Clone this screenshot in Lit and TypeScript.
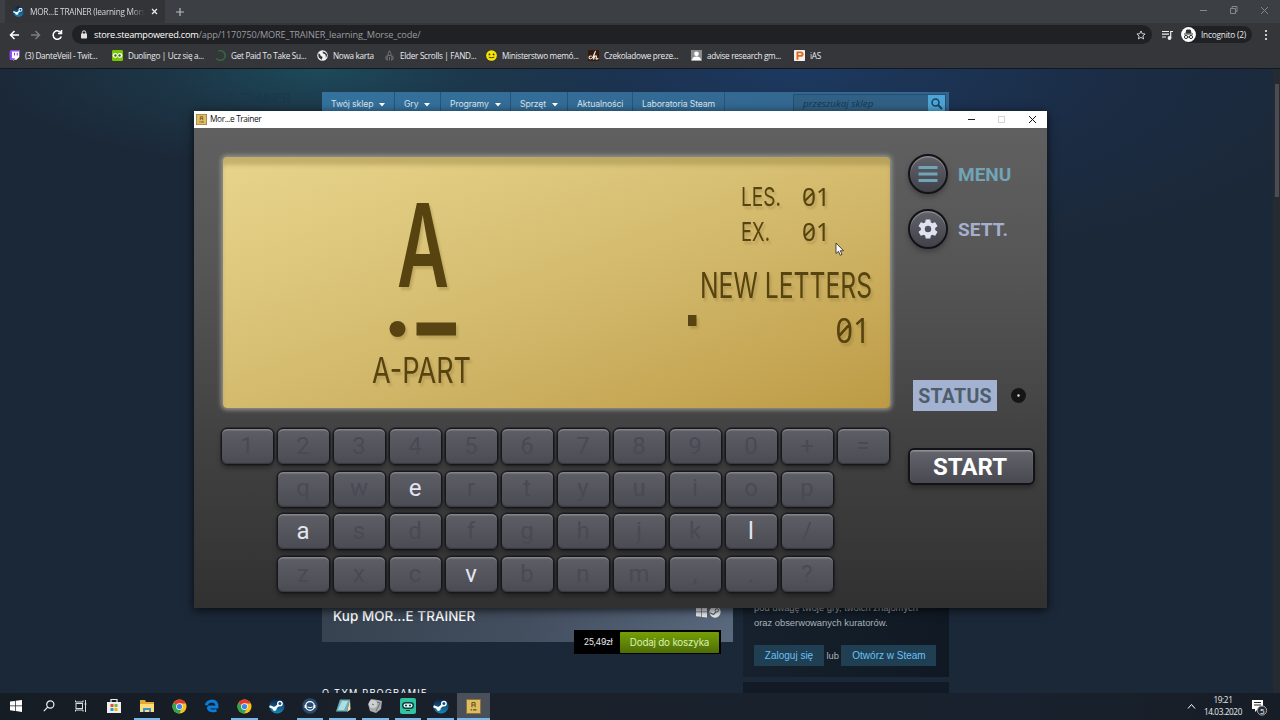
import { LitElement, html, svg, css } from "lit";
import { customElement } from "lit/decorators.js";
import { classMap } from "lit/directives/class-map.js";

const steam = (s: number) => html`<svg width=${s} height=${s} viewBox="0 0 16 16">
  <defs><linearGradient id="sg" x1="0" y1="0" x2="0" y2="1"><stop offset="0" stop-color="#0b1d3c"/><stop offset="1" stop-color="#1787bd"/></linearGradient></defs>
  <circle cx="8" cy="8" r="7.6" fill="url(#sg)"/>
  <path d="M.5 8.2 5.6 10.4 8.6 8 10.6 5.8" fill="none" stroke="#fff" stroke-width="2.3"/>
  <circle cx="10.9" cy="5.6" r="2.9" fill="#fff"/><circle cx="10.9" cy="5.6" r="1.5" fill="#17508a"/>
  <circle cx="5.6" cy="10.8" r="2.1" fill="#fff"/></svg>`;

const chrome = html`<svg width="15" height="15" viewBox="0 0 16 16">
  <circle cx="8" cy="8" r="7.5" fill="#fbc116"/>
  <path d="M8 8 1.5 4.3A7.5 7.5 0 0 1 14.5 4.3L14.6 4.8H8z" fill="#e33b2e"/>
  <path d="M8 8 1.5 4.3A7.5 7.5 0 0 0 7.6 15.5L11 9.6z" fill="#30a350"/>
  <circle cx="8" cy="8" r="3.6" fill="#f4f4f4"/><circle cx="8" cy="8" r="2.8" fill="#4285f0"/></svg>`;

const lcdIcon = (s: number) => html`<svg width=${s} height=${s} viewBox="0 0 16 16">
  <rect x=".5" y=".5" width="15" height="15" fill="#dfbd62" stroke="#8d7333"/>
  <path d="M6.3 8.8V3.8h3.4v5M6.3 6.4h3.4" fill="none" stroke="#5e4a19" stroke-width="1"/>
  <path d="M5 11.5h1.6M7.6 11.5h3.6" stroke="#5e4a19" stroke-width="1.4"/></svg>`;

const bookmarks = [
  { w: 103, t: "(3) DanteVeiil - Twit...", i: svg`<path d="M2 1h13v9l-4 4H8l-2 2v-2H2z" fill="#fff"/><path d="M1 2 3 0h13v2H4v9H1z" fill="#8d46e8"/><path d="M1 3h3v9h4v2l-2 2v-2H1z" fill="#8d46e8"/><path d="M8 4v4M12 4v4" stroke="#8d46e8" stroke-width="1.6"/>` },
  { w: 103, t: "Duolingo | Ucz się a...", i: svg`<rect width="16" height="16" rx="2" fill="#78c800"/><circle cx="4.6" cy="8" r="3.6" fill="#fff"/><circle cx="11.4" cy="8" r="3.6" fill="#fff"/><circle cx="5" cy="8" r="1.8" fill="#43621b"/><circle cx="11" cy="8" r="1.8" fill="#43621b"/><path d="m6.6 10 1.4 2 1.4-2z" fill="#f5a700"/>` },
  { w: 102, t: "Get Paid To Take Su...", i: svg`<path d="M5 1.5A7 7 0 1 1 2 12" fill="none" stroke="#2f6a3f" stroke-width="2.4"/>` },
  { w: 67, t: "Nowa karta", i: svg`<circle cx="8" cy="8" r="7.6" fill="#f2f2f2"/><path d="M2 5q3 0 3 3l3 2-1 4Q2 12 2 8zM8 2l1 3 3 1 1 4-2 2q4-2 3.500-6Q12 2 8 2z" fill="#35363a"/>` },
  { w: 102, t: "Elder Scrolls | FAND...", i: svg`<path d="M5 15Q2 14 2.500 10L5 8l-.5 4zm6 0q3-1 2.500-5L11 8l.5 4zM8 1 6 5v3h4V5zm0 9v5" fill="none" stroke="#77787b" stroke-width="1.300"/>` },
  { w: 102, t: "Ministerstwo memó...", i: svg`<circle cx="8" cy="8" r="7.8" fill="#f7e600"/><circle cx="5" cy="6.400" r="1.300" fill="#2c2a07"/><circle cx="11" cy="6.400" r="1.300" fill="#2c2a07"/><path d="M4 10.500q4 1.500 8 0" fill="none" stroke="#2c2a07" stroke-width="1.300"/>` },
  { w: 103, t: "Czekoladowe preze...", i: svg`<rect width="16" height="16" fill="#35190b"/><path d="M5.500 9q-4-1-4 2.500 1 3 5 0L11 1.500Q9 5 8 14q2-6 4-5.500 1 1-.5 4.500 1 1 3.500-1" fill="none" stroke="#f1e8df" stroke-width="1.600"/>` },
  { w: 103, t: "advise research gm...", i: svg`<rect width="16" height="16" fill="#8c8c8c"/><circle cx="8" cy="5.600" r="3.400" fill="#fff"/><path d="M1.500 15q0-5.500 6.500-5.500T14.500 15z" fill="#fff"/>` },
  { w: 40, t: "iAS", i: svg`<rect width="16" height="16" rx="1" fill="#f4f0ec"/><path d="M5 14V3.500h4.500q3 0 3 2.500t-3 2.500H5" fill="none" stroke="#e06a1c" stroke-width="2.800"/>` },
];

const nav: [string, number, boolean][] = [
  ["Twój sklep", 73, true], ["Gry", 46, true], ["Programy", 70, true],
  ["Sprzęt", 57, true], ["Aktualności", 65, false], ["Laboratoria Steam", 92, false],
];

const keyRows = ["1234567890+=", " qwertyuiop", " asdfghjkl/", " zxcvbnm,.?"];
const active = new Set(["e", "a", "l", "v"]);

@customElement("lcd-panel")
export class LcdPanel extends LitElement {
  static styles = css`
    :host { display: block; width: 667px; height: 251px; border-radius: 4px; overflow: visible;
      background: linear-gradient(160deg, #e8d48c 0%, #dcc67b 30%, #cfb466 62%, #bd9b45 100%);
      box-shadow: 0 0 4px 2px #93938f, inset 0 9px 4px -1px #8f7c3d66; }
    svg { display: block; overflow: visible; }
    text { font-family: Inter, sans-serif; fill: #57430f; }
    .num { font-family: "Noto Sans", sans-serif; font-feature-settings: "zero" 1; }
    .shade { filter: drop-shadow(2px 3px 1px #6e561d3d); }
  `;
  private word(s: string, x: number, y: number, w: number, size: number, weight = 400, cls = "") {
    return svg`<text class=${cls} x=${x} y=${y} font-size=${size} font-weight=${weight} textLength=${w} lengthAdjust="spacingAndGlyphs">${s}</text>`;
  }
  render() {
    return html`<svg class="shade" width="667" height="251" viewBox="223 157 667 251">
      ${this.word("A", 397, 287, 52, 115, 600)}
      <circle cx="397.500" cy="329" r="8" fill="#574412"/>
      <rect x="416.500" y="322.500" width="39.500" height="13" fill="#574412"/>
      ${this.word("A-PART", 372, 383, 99, 35)}
      ${this.word("LES.", 741, 206, 40, 26)}
      ${this.word("01", 802, 206, 28, 26, 400, "num")}
      ${this.word("EX.", 741, 241, 29, 26)}
      ${this.word("01", 802, 241, 28, 26, 400, "num")}
      ${this.word("NEW LETTERS", 700, 297.500, 172, 35)}
      ${this.word("01", 835.500, 342.500, 35, 35, 400, "num")}
      <rect x="688" y="315" width="8.500" height="11" fill="#574412"/>
    </svg>`;
  }
}

@customElement("trainer-window")
export class TrainerWindow extends LitElement {
  static styles = css`
    :host { display: flex; flex-direction: column; width: 853px; height: 497px; font-family: Roboto, sans-serif; box-shadow: 0 2px 9px #000b; }
    .title { height: 17px; background: #fff; display: flex; align-items: center; color: #111; font: 8.300px/14px "Open Sans", sans-serif; letter-spacing: -.38px; }
    .title .name { padding-bottom: 1px; }
    .title .ic { display: flex; padding: 0 3px 0 2px; }
    .title .sp { flex: 1; }
    .title svg { display: block; }
    .title .controls { margin-right: 9px; }
    .body { flex: 1; display: grid; grid-template-columns: 669px 127px; column-gap: 18px; padding: 29px 0 0 27px;
      background: linear-gradient(180deg, #606060 0%, #555 30%, #434343 62%, #313131 100%); }
    .left { display: flex; flex-direction: column; gap: 19px; }
    .lcdwrap { padding-left: 2px; height: 252px; }
    .keys { display: grid; grid-template-columns: repeat(12, 53px); column-gap: 3px; row-gap: 5.700px; }
    .key { box-sizing: border-box; height: 37px; border: 1.500px solid #17171b; border-radius: 6px; display: flex; align-items: center; justify-content: center;
      font-size: 24px; line-height: 30px; padding-bottom: 2px; padding-right: 1px; color: #4a4a53; background: linear-gradient(#5e5e67, #4b4b53);
      box-shadow: inset 0 1.500px 1px #85858c, inset 0 -1px 1px #37373f, 0 0 0 .5px #1b1b1f, 0 3px 5px #0005; }
    .key.on { color: #e4e4f1; }
    .side { display: flex; flex-direction: column; align-items: flex-start; }
    .line { display: flex; align-items: center; gap: 10px; height: 40px; font-size: 19px; font-weight: 700; margin: -3px 0 18px; }
    .menu { color: #71a4b7; }
    .sett { color: #a5afce; letter-spacing: .1px; }
    .round { box-sizing: border-box; width: 40px; height: 40px; border-radius: 50%; border: 2px solid #121217; background: linear-gradient(#62626a, #41414a);
      display: grid; place-items: center; box-shadow: inset 0 1.500px 1px #8b8b92, 0 3px 5px #0004; }
    .round svg { display: block; }
    .status { display: flex; align-items: center; gap: 14px; margin: 113px 0 37px 5px; }
    .tag { width: 84px; height: 31px; background: #a3b2d1; display: grid; place-items: center; color: #4f5d6b; font-size: 19.500px; font-weight: 700; letter-spacing: .3px; line-height: 33px; }
    .led { width: 15px; height: 15px; border-radius: 50%; background: radial-gradient(circle, #ddd 0 .7px, #151515 1.700px); }
    .start { box-sizing: border-box; width: 127px; height: 37px; border: 2px solid #131317; border-radius: 6px; display: grid; place-items: center; color: #fff; font-size: 24px; line-height: 35px; font-weight: 700; padding-right: 3px;
      background: linear-gradient(#64646c, #484850); box-shadow: inset 0 1.500px 1px #92929a, 0 3px 5px #0005; }
  `;
  render() {
    return html`
      <div class="title"><span class="ic">${lcdIcon(11)}</span><span class="name">Mor...e Trainer</span><span class="sp"></span>
        <svg class="controls" width="72" height="11" viewBox="0 0 72 11" fill="none"><path d="M2 5.500h7" stroke="#222"/><rect x="32.500" y="2.500" width="6" height="6" stroke="#d5d5d5"/><path d="m63 2 7 7m0-7-7 7" stroke="#111"/></svg>
      </div>
      <div class="body">
        <div class="left">
          <div class="lcdwrap"><lcd-panel></lcd-panel></div>
          <div class="keys">${keyRows.map((r, ri) => [...r.padEnd(ri < 3 ? 12 : r.length)].map((k) =>
            k === " " ? html`<span></span>` : html`<div class=${classMap({ key: true, on: active.has(k) })}>${k}</div>`))}</div>
        </div>
        <div class="side">
          <div class="line menu"><div class="round"><svg width="20" height="18"><path d="M.5 2.500h19M.5 9h19M.5 15.500h19" stroke="#71a4b7" stroke-width="2.800"/></svg></div>MENU</div>
          <div class="line sett"><div class="round"><svg width="24" height="24" viewBox="0 0 24 24"><path fill="#dfe3f1" d="M19.140 12.940c.04-.3.060-.61.060-.94s-.02-.64-.07-.94l2.030-1.580a.49.49 0 0 0 .12-.61l-1.920-3.320a.49.49 0 0 0-.59-.22l-2.390.96a7 7 0 0 0-1.620-.94l-.36-2.540A.48.48 0 0 0 13.920 2.400h-3.840a.48.48 0 0 0-.47.410l-.36 2.540a7 7 0 0 0-1.620.94l-2.390-.96a.48.48 0 0 0-.59.22L2.740 8.870a.48.48 0 0 0 .12.610l2.030 1.580a7 7 0 0 0 0 1.880l-2.030 1.580a.49.49 0 0 0-.12.610l1.920 3.320c.12.220.37.290.59.220l2.390-.96c.5.380 1.030.7 1.620.94l.36 2.540c.05.240.24.410.48.410h3.840c.24 0 .44-.17.470-.41l.36-2.540a7 7 0 0 0 1.620-.94l2.390.96c.22.080.47 0 .59-.22l1.920-3.320a.48.48 0 0 0-.12-.61zM12 15.200a3.200 3.200 0 1 1 0-6.400 3.200 3.200 0 0 1 0 6.400z"/></svg></div>SETT.</div>
          <div class="status"><div class="tag">STATUS</div><div class="led"></div></div>
          <div class="start">START</div>
        </div>
      </div>`;
  }
}

@customElement("app-root")
export class AppRoot extends LitElement {
  static styles = css`
    :host { display: flex; flex-direction: column; position: relative; width: 1280px; height: 720px; overflow: hidden; background: #1b2838; font-family: "Open Sans", sans-serif; color: #e8eaed; }
    svg { display: block; flex: none; }
    .tabs { height: 23px; flex: none; background: #3c3f43; display: flex; align-items: center; padding: 0 5px; }
    .tab { align-self: stretch; width: 160px; background: #323438; border-radius: 0 0 2px 0; display: flex; align-items: center; gap: 6px; box-sizing: border-box; padding-left: 8px; font-size: 8.300px; letter-spacing: -.28px; }
    .tab .name { width: 115px; overflow: hidden; white-space: nowrap; color: #d5d6d8; mask-image: linear-gradient(90deg, #000 88%, transparent); }
    .plus { margin-left: 10px; }
    .sp { flex: 1; }
    .bar { height: 23px; flex: none; background: #35363a; display: flex; align-items: center; padding-left: 8px; }
    .pill { box-sizing: border-box; width: 1080px; height: 19px; border-radius: 10px; background: #202124; display: flex; align-items: center; padding: 0 6px 0 8px; font-size: 9.200px; color: #9a9ca0; margin-left: 8px; flex: none; }
    .pill .url { margin-left: 6px; white-space: nowrap; letter-spacing: -.14px; }
    .pill b { color: #fff; font-weight: 500; letter-spacing: -.24px; }
    .note { margin-left: 9px; }
    .inc { display: flex; align-items: center; height: 17px; width: 71px; border-radius: 9px; background: #202124; gap: 5px; font-size: 8.300px; letter-spacing: -.22px; white-space: nowrap; margin-left: 7px; }
    .more { margin-left: 10px; }
    .marks { box-sizing: border-box; height: 23px; flex: none; background: #35363a; border-bottom: 1px solid #111820; display: flex; align-items: center; padding: 0 0 3px 9px; font-size: 8.200px; letter-spacing: -.3px; }
    .mark { display: flex; align-items: center; gap: 5px; white-space: nowrap; flex: none; }
    .page { height: 624px; flex: none; overflow: hidden; display: flex;
      background: radial-gradient(ellipse 330px 100px at 320px 0, #1d4a5a 0, #1d445580 45%, transparent 100%), radial-gradient(ellipse 560px 200px at 800px 0, #1c3960 0, #1b2f4d80 60%, transparent 100%), #1b2838; }
    .gutter { box-sizing: border-box; width: 322px; flex: none; padding: 21px 32px 0 0; text-align: right; font: 13px/16px Inter, sans-serif; letter-spacing: -.6px; color: #19384b; }
    .site { width: 627px; margin: 23px 0 0; flex: none; font-family: Inter, sans-serif; display: flex; flex-direction: column; }
    .nav { height: 26px; background: linear-gradient(90deg, #34719d, #33658d); display: flex; color: #d9e5ee; font-size: 8.700px; flex: none; }
    .item { box-sizing: border-box; border-right: 1px solid #275479; height: 26px; padding: 6px 0 0 9px; line-height: 12px; display: flex; gap: 6px; white-space: nowrap; letter-spacing: -.13px; }
    .item svg { margin-top: 5px; }
    .search { margin: 2px 3px 0 auto; width: 153px; height: 22px; box-sizing: border-box; border: 1px solid #254f72; background: #306185; display: flex; justify-content: space-between; padding-left: 9px; font: italic 9.800px/18px "Open Sans", sans-serif; color: #15364f; }
    .glass { width: 17px; height: 20px; background: #4da5d5; display: flex; justify-content: center; padding-top: 2px; box-sizing: border-box; }
    .lower { display: flex; gap: 10px; margin-top: 453px; flex: none; }
    .buy { width: 411px; }
    .box { height: 71px; background: linear-gradient(100deg, #36424f, #434e5f 50%, #59697e); display: flex; justify-content: space-between; box-sizing: border-box; padding: 35px 12px 0 11px; font-size: 13.400px; font-weight: 500; line-height: 20px; color: #fff; letter-spacing: .06px; }
    .os { display: flex; gap: 2px; }
    .price { margin: -12px 12px 0 auto; width: 147px; height: 24px; box-sizing: border-box; padding: 2px; background: #000; display: flex; font-size: 8.700px; align-items: center; }
    .price span { width: 44px; text-align: center; letter-spacing: -.3px; }
    .add { flex: 1; height: 21px; border-radius: 1px; display: grid; place-items: center; background: linear-gradient(#74a006, #4e6d07); color: #daf0b0; font-size: 9.800px; letter-spacing: -.18px; }
    .about { margin-top: 32px; font-size: 9.200px; letter-spacing: 1.250px; line-height: 14px; color: #fff; white-space: nowrap; }
    .rec { width: 206px; display: flex; flex-direction: column; gap: 5px; font-family: "Liberation Sans", sans-serif; }
    .card { height: 106px; box-sizing: border-box; padding: 30px 0 0 11px; background: linear-gradient(90deg, #16212d, #101923); color: #acb2b8; font-size: 9.350px; line-height: 14.500px; white-space: nowrap; }
    .btns { display: flex; align-items: center; gap: 2.500px; margin-top: 15px; line-height: 12px; }
    .btn { height: 21px; width: 70px; background: #213f53; color: #67c1f5; display: grid; place-items: center; font-size: 10px; }
    .btn.wide { width: 95px; }
    .next { height: 20px; background: #111a25; }
    .scroll { margin-left: auto; width: 7px; background: #262a31; padding-top: 15px; }
    .thumb { height: 113px; width: 4px; margin-left: 2px; background: #4b4d52; }
    .task { height: 27px; flex: none; background: linear-gradient(90deg, #161c24, #1a212b 40%, #18212d 80%, #171d26); display: flex; }
    .app { width: 32.650px; box-sizing: border-box; border-bottom: 1px solid transparent; display: grid; place-items: center; position: relative; }
    .app.open::after { content: ""; position: absolute; bottom: -1px; left: 3px; right: 3px; height: 2px; background: #76b9ed; }
    .app.cur { background: #4a505a; background-clip: border-box; }
    .app.cur::after { left: 0; right: 0; }
    .tray { margin-left: auto; display: flex; align-items: center; gap: 8px; padding-right: 12px; font-size: 8.200px; line-height: 12px; text-align: center; letter-spacing: -.37px; }
    .clock { position: relative; top: -1px; }
    trainer-window { position: absolute; left: 194px; top: 111px; }
    .cursor { position: absolute; left: 835px; top: 242px; }
  `;
  private taskIcons = [
    { c: "", i: html`<svg width="14" height="14" viewBox="0 0 14 14"><path d="m1 2.600 5-.7v4.700H1zM6.700 1.800 13 1v5.600H6.700zM1 7.300h5V12l-5-.7zM6.700 7.300H13V13l-6.300-.9z" fill="#fff"/></svg>` },
    { c: "", i: html`<svg width="14" height="14" fill="none" stroke="#eee" stroke-width="1.200"><circle cx="8.300" cy="5.500" r="3.600"/><path d="M5.700 8.200 1.800 12.200"/></svg>` },
    { c: "", i: html`<svg width="14" height="14" fill="none" stroke="#ddd"><rect x="1" y="4.500" width="6.500" height="5"/><path d="M.5 1.500v1.500H8V1.500M.5 12.500v-1.500H8v1.500M10.500 1v12M9.500 5h2"/></svg>` },
    { c: "", i: html`<svg width="16" height="16"><path d="M1 4h14v11H1z" fill="#eee"/><path d="M5 4V1.500h6V4" fill="none" stroke="#eee" stroke-width="1.200"/><path d="M4.500 6h3v3h-3z" fill="#e84d2a"/><path d="M8.500 6h3v3h-3z" fill="#73b92c"/><path d="M4.500 10h3v3h-3z" fill="#2897db"/><path d="M8.500 10h3v3h-3z" fill="#edb410"/></svg>` },
    { c: "open", i: html`<svg width="16" height="14"><path d="M1 1h5l1 2h8v10H1z" fill="#e2a934"/><path d="M1 5h14v8H1z" fill="#ffdc78"/><path d="M4 13V9h8v4h-2v-2H6v2z" fill="#3494d6"/></svg>` },
    { c: "", i: chrome },
    { c: "", i: html`<svg width="16" height="16" viewBox="0 0 16 16"><path d="M3.800 9h9.200Q13.200 3.200 8 3 3.500 3.200 2 7.200M4.200 9q.2 5.400 8.300 3.300" fill="none" stroke="#0b7cd8" stroke-width="2.800"/></svg>` },
    { c: "open", i: chrome },
    { c: "", i: steam(16) },
    { c: "open", i: html`<svg width="16" height="16"><circle cx="8" cy="8" r="7.700" fill="#284c70"/><circle cx="8" cy="8" r="4.300" fill="none" stroke="#fff" stroke-width="1.300"/><path d="M3.500 7v3M12.500 7v3" stroke="#fff" stroke-width="1.800"/><path d="M5.500 9Q8 10.500 10.500 9" fill="none" stroke="#fff"/></svg>` },
    { c: "open", i: html`<svg width="16" height="16"><path d="M5 1.500h10L12 13.500H1z" fill="#69b1bd"/><path d="M7 3h6l-4 9H3z" fill="#b1dde2"/><path d="m15 1.500.5 10L12 14z" fill="#eee2b0"/></svg>` },
    { c: "open", i: html`<svg width="16" height="16"><path d="M4 1 11 2l4 1-1 8-5 4-6-2-2-7z" fill="#a9abad"/><circle cx="6" cy="6" r="4" fill="#cfd0d1"/><path d="m10 4 3 1-4 8M5 6l2 1" fill="none" stroke="#6d7073"/></svg>` },
    { c: "open", i: html`<svg width="16" height="16"><rect width="16" height="16" rx="2" fill="#31c3a2"/><rect x="2" y="4" width="12" height="7" rx="3.500" fill="#153d3c"/><rect x="3.500" y="5.500" width="9" height="4" rx="2" fill="#d9f7ef"/><path d="M5 7.500h2M9 7.500h2" stroke="#153d3c" stroke-width="1.500"/><path d="M6 12.500h4" stroke="#153d3c"/></svg>` },
    { c: "open", i: steam(16) },
    { c: "open cur", i: lcdIcon(15) },
  ];
  render() {
    return html`
      <div class="tabs">
        <div class="tab">${steam(11)}<span class="name">MOR...E TRAINER (learning Mors</span><svg width="7" height="7"><path d="m1 1 5 5m0-5L1 6" stroke="#eee" stroke-width="1.200"/></svg></div>
        <svg class="plus" width="10" height="10"><path d="M5 1v8M1 5h8" stroke="#bbb" stroke-width="1.200"/></svg>
        <span class="sp"></span>
        <svg width="75" height="18" fill="none" stroke="#85878b"><path d="M0 7.500h7M61 4l7 7m0-7-7 7"/><path d="M30.500 5.500h5v5h-5zM32 5.500v-2h5v5h-1.500"/></svg>
      </div>
      <div class="bar">
        <svg width="56" height="14" fill="none" stroke-width="1.500"><path d="M11 7H2.500M6.500 3l-4 4 4 4" stroke="#fff"/><path d="M23 7h8.500M27.500 3l4 4-4 4" stroke="#7b7d81"/><path d="M53 5A4.200 4.200 0 1 0 53.300 8.500M53.500 2v3.500H50" stroke="#fff"/></svg>
        <div class="pill"><svg width="8" height="9"><rect x="1" y="3.500" width="6" height="5" rx=".7" fill="#e0e0e0"/><path d="M2.300 4V2.500a1.700 1.700 0 0 1 3.400 0V4" fill="none" stroke="#e0e0e0"/></svg>
          <span class="url"><b>store.steampowered.com</b>/app/1170750/MORE_TRAINER_learning_Morse_code/</span><span class="sp"></span>
          <svg width="10" height="10" viewBox="0 0 10 10"><path d="m5 1 1.200 2.700 2.900.3L6.900 6l.7 2.900L5 7.400 2.400 8.900 3.100 6 .9 4l2.900-.3z" fill="none" stroke="#ddd" stroke-width=".9"/></svg></div>
        <svg class="note" width="13" height="12" fill="none" stroke="#eee" stroke-width="1.200"><path d="M1 2.500h7M1 5.200h7M1 8h4M9.700 9V2.500H12"/><circle cx="8.500" cy="9" r="1.300" fill="#eee"/></svg>
        <div class="inc"><svg width="15" height="15" viewBox="0 0 15 15"><circle cx="7.500" cy="7.500" r="7.400" fill="#fff"/><path d="M3 7h9M5 6l.7-3h3.600l.7 3z" fill="#333" stroke="#333"/><circle cx="5" cy="10" r="1.600" fill="none" stroke="#333"/><circle cx="10" cy="10" r="1.600" fill="none" stroke="#333"/><path d="M6.500 10h2" stroke="#333"/></svg>Incognito (2)</div>
        <svg class="more" width="16" height="12" fill="#eee"><circle cx="4" cy="2" r="1.100"/><circle cx="4" cy="6" r="1.100"/><circle cx="4" cy="10" r="1.100"/></svg>
      </div>
      <div class="marks">${bookmarks.map((b) => html`<div class="mark" style="width:${b.w}px"><svg width="11" height="11" viewBox="0 0 16 16">${b.i}</svg>${b.t}</div>`)}</div>
      <div class="page">
        <div class="gutter">E TRAINER</div>
        <div class="site">
          <div class="nav">${nav.map(([t, w, d]) => html`<div class="item" style="width:${w}px">${t}${d ? html`<svg width="6" height="4"><path d="M0 0h6L3 3.500z" fill="#fff"/></svg>` : ""}</div>`)}
            <div class="search">przeszukaj sklep<span class="glass"><svg width="13" height="13" fill="none" stroke="#194262" stroke-width="1.500"><circle cx="5.500" cy="5.500" r="3.500"/><path d="m8 8 4 4" stroke-width="2"/></svg></span></div></div>
          <div class="lower">
            <div class="buy">
              <div class="box">Kup MOR...E TRAINER<div class="os"><svg width="11" height="12"><path d="M0 1.500 5 1v4.500H0zM5.700.900 11 .3v5.200H5.700zM0 6.300h5v4.500l-5-.5zM5.700 6.300H11V11.500l-5.300-.6z" fill="#eee"/></svg><svg width="12" height="12" viewBox="0 0 16 16"><circle cx="8" cy="8" r="7.500" fill="#eee"/><circle cx="10.500" cy="5.800" r="2.200" fill="none" stroke="#536074" stroke-width="1.300"/><path d="m1 9 5 2.500 3-3.500" fill="none" stroke="#536074" stroke-width="1.600"/></svg></div></div>
              <div class="price"><span>25,49zł</span><div class="add">Dodaj do koszyka</div></div>
              <div class="about">O TYM PROGRAMIE</div>
            </div>
            <div class="rec">
              <div class="card">pod uwagę twoje gry, twoich znajomych<br>oraz obserwowanych kuratorów.
                <div class="btns"><span class="btn">Zaloguj się</span>lub<span class="btn wide">Otwórz w Steam</span></div></div>
              <div class="next"></div>
            </div>
          </div>
        </div>
        <div class="scroll"><div class="thumb"></div></div>
      </div>
      <div class="task">${this.taskIcons.map((a) => html`<div class="app ${a.c}">${a.i}</div>`)}
        <div class="tray"><svg width="9" height="7" fill="none" stroke="#fff"><path d="m1 5.500 3.500-4 3.500 4"/></svg><div class="clock">19:21<br>14.03.2020</div>
          <svg width="18" height="18" viewBox="0 0 18 18"><path d="M2 2h11v9H8l-3 3v-3H2z" fill="#fff"/><path d="M4 4.500h7M4 7h7" stroke="#222"/><circle cx="12" cy="12.500" r="4.600" fill="#252b34" stroke="#aaa"/><text x="10" y="15.600" font-size="8" fill="#fff">5</text></svg></div></div>
      <trainer-window></trainer-window>
      <svg class="cursor" width="10" height="15"><path d="M1 1v10.500l2.500-2.200 1.700 3.900 1.800-.8-1.700-3.700h3.200z" fill="#fff" stroke="#222" stroke-width=".8"/></svg>`;
  }
}
